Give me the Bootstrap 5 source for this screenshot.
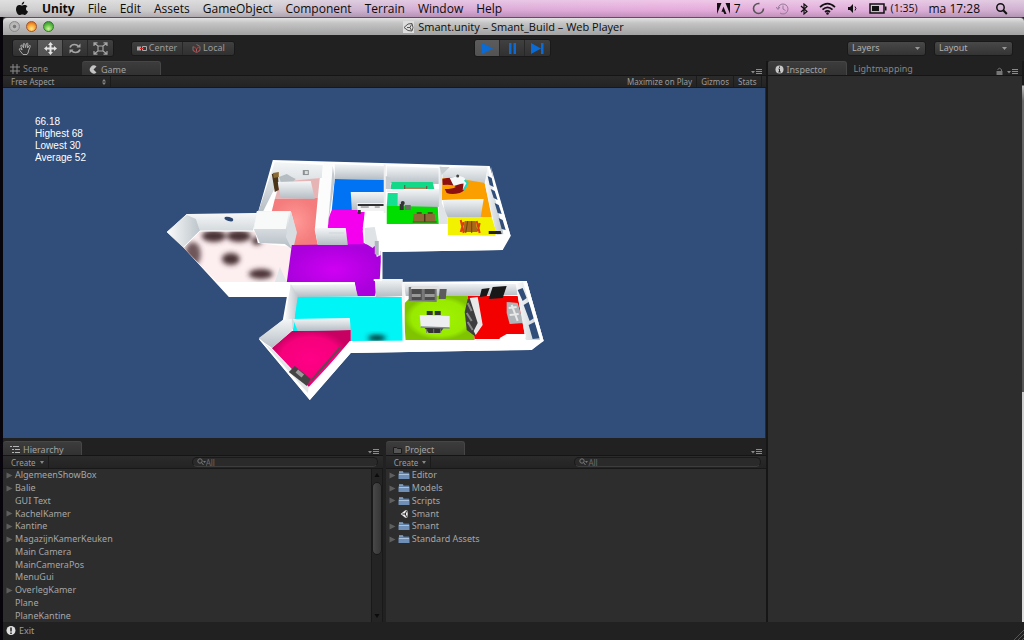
<!DOCTYPE html>
<html lang="en">
<head>
<meta charset="utf-8">
<meta name="viewport" content="width=device-width, initial-scale=1">
<title>Smant.unity – Smant_Build – Web Player</title>
<link href="https://cdn.jsdelivr.net/npm/bootstrap@5.3.0/dist/css/bootstrap.min.css" rel="stylesheet">
<style>
:root { --edge: #161616; --panel: #2d2d2d; --chrome: #212121; --ink: #9c9c9c; }
body { background: #07040c; color: var(--ink); font: 9px/12px "Noto Sans", sans-serif; overflow: hidden; }
svg { display: block; flex: none; }
a { color: inherit; text-decoration: none; }
button { font: inherit; color: inherit; }
.menubar { height: 17px; background: linear-gradient(rgba(255,255,255,.35), rgba(255,255,255,0) 60%, rgba(60,40,60,.2)), linear-gradient(90deg, #cfcfcf, #cbc9cb 25%, #cbb5cf 33%, #d9a9d6 45%, #e5aadb 65%, #e0aeda 85%, #cfb0d0); color: #0b0b0b; font: 12px/17px "Open Sans", sans-serif; padding: 0 16px 0 15px; }
.menus { gap: 13px; }
.extras { gap: 11px; }
.titlebar { height: 18px; background: linear-gradient(#e2e2e2, #c4c4c4 30%, #a2a2a2); border-top: 1px solid #555; border-radius: 4px 4px 0 0; color: #0b0b0b; font: 11px/17px "Open Sans", sans-serif; padding: 0 6px; }
.lights { gap: 6px; }
.lamp { width: 11px; height: 11px; border-radius: 50%; border: 1px solid #777; padding: 0; }
.lamp-close { background: radial-gradient(#777 20%, #bbb 35%, #aaa); border-color: #8a8a8a; }
.lamp-min { background: radial-gradient(circle at 50% 75%, #ffe98a, #f9a332 50%, #c8531c); border-color: #a4552a; }
.lamp-max { background: radial-gradient(circle at 50% 75%, #cdf79b, #63c044 50%, #27822a); border-color: #2f7a2d; }
.thirds { display: grid; grid-template-columns: 1fr auto 1fr; align-items: center; }
.app { margin-left: 3px; background: var(--chrome); min-height: 0; }
.toolbar { height: 26px; padding: 0 11px 0 9px; }
.tool { border: 0; background: linear-gradient(#404040, #303030); width: 25px; height: 17px; padding: 0; display: flex; align-items: center; justify-content: center; gap: 2px; border-right: 1px solid #272727; }
.toolset { border-radius: 3px; overflow: hidden; border: 1px solid #191919; height: 18px; }
.tool.on { background: linear-gradient(#5c5c5c, #525252); }
.toolset-low { height: 15px; margin-left: 17px; }
.toolset-low .tool { width: 51px; height: 13px; }
.pick { appearance: none; width: 79px; height: 15px; padding: 0 4px; font: inherit; color: #b0b0b0; border: 1px solid #191919; border-radius: 3px; background: url("data:image/svg+xml,%3Csvg xmlns='http://www.w3.org/2000/svg' viewBox='0 0 5 3'%3E%3Cpath d='M0 0h5L2.500 3z' fill='%23999'/%3E%3C/svg%3E") right 5px center / 5px 3px no-repeat, linear-gradient(#484848, #343434); }
.left-side { flex: 764 1 0; min-width: 0; }
.right-side { flex: 255 1 0; min-width: 0; border-left: 2px solid var(--edge); }
.view-part { flex: 377 1 0; min-height: 0; }
.lists-part { flex: 181 1 0; min-height: 0; padding-top: 3px; gap: 3px; }
.tabs { height: 14px; padding-right: 3px; }
.tabx { border: 0; background: none; color: #858585; height: 14px; width: 79px; padding: 2px 0 0 7px; gap: 3px; text-align: left; display: flex; align-items: center; white-space: nowrap; line-height: 12px; }
.tabx.on { background: linear-gradient(#3c3c3c, #323232); color: #a2a2a2; border: 1px solid #464646; border-width: 1px 1px 0 0; border-radius: 3px 3px 0 0; }
.subbar { height: 13px; background: linear-gradient(#2b2b2b, #232323); border-top: 1px solid #151515; border-bottom: 1px solid #181818; font-size: 8px; line-height: 11px; }
.subbar button { border: 0; border-right: 1px solid #1b1b1b; background: none; padding: 0 4px; height: 100%; line-height: 11px; }
.subbar .aspectbox { width: 108px; }
.view { background: #314d79; min-height: 0; border-right: 1px solid #1c2a44; }
.readout { position: absolute; left: 32px; top: 28px; color: #fff; font: 10px/12px "Liberation Sans", sans-serif; }
.panelx { background: var(--chrome); min-width: 0; flex: 1 1 0; }
.lists-part .subbar { height: 14px; line-height: 12px; }
.seek { width: 49%; margin-right: 5px; height: 10px; border-radius: 5px; border: 1px solid #1a1a1a; background: #2a2a2a; padding: 0 4px; color: #606060; border-bottom-color: #3d3d3d; }
.seek input { appearance: none; border: 0; background: none; padding: 0; font: 8px/8px "Noto Sans", sans-serif; height: 8px; color: inherit; min-width: 0; outline: 0; }
.seek input::placeholder { color: #6a6a6a; opacity: 1; }
.rows { display: grid; grid-template-rows: repeat(12, 1fr); background: var(--panel); min-height: 0; min-width: 0; flex: 1 1 0; margin: 0; padding: 0 0 0 3px; list-style: none; color: #a6a6a6; }
.rows li { display: flex; align-items: center; gap: 2px; min-height: 0; }
.twist { width: 7px; }
.scroller { width: 12px; background: #242424; border: 1px solid #191919; border-width: 0 1px; }
.thumb { flex: 72 1 0; border-radius: 5px; background: linear-gradient(90deg, #484848, #363636); border: 1px solid #1a1a1a; }
.thumb-rest { flex: 54 1 0; }
.inspect { background: var(--panel); border-top: 1px solid #151515; }
.statusbar { height: 18px; padding-left: 3px; gap: 3px; }
.gutter { width: 2px; background: linear-gradient(#181818 24px, #bbb 25px, #666 40px, #555 59%, #ccc 59%, #ddd); }
</style>
</head>
<body class="vh-100 d-flex flex-column">
<svg width="0" height="0" class="position-absolute" aria-hidden="true">
  <symbol id="tri" viewBox="0 0 7 7"><path d="M.5.5v6L6.500 3.500z" fill="#5e5e5e"/></symbol>
  <symbol id="burger" viewBox="0 0 12 6"><path d="M0 2h4L2 4.500z" fill="#8a8a8a"/><path d="M5 .5h6M5 2.500h6M5 4.500h6" stroke="#8a8a8a"/></symbol>
  <symbol id="folder" viewBox="0 0 12 10"><path d="M1 1.500h4l1 1h5v6H1z" fill="#52729a"/><path d="M.5 3.500h11v5.500H.5z" fill="#6f8fb6"/><path d="M1 4.500h10M1 2h4" stroke="#a8c0dc"/></symbol>
  <symbol id="cube" viewBox="0 0 12 12"><path d="M2 6 7.500 1.500l2.500.3.500 4.200-.5 4.200-2.500.3z" fill="currentColor"/><path d="M4 6h3.500M7.500 6l1.500-3.500M7.500 6 9 9.500" stroke="#222" stroke-width="1.200"/></symbol>
  <symbol id="lens" viewBox="0 0 9 8"><circle cx="3" cy="3" r="2.200" fill="none" stroke="#777"/><path d="m4.500 4.500 2 2.500" stroke="#777"/><path d="M6 3h3L7.500 5z" fill="#777"/></symbol>
</svg>

<nav class="menubar d-flex align-items-center justify-content-between" aria-label="Menu bar">
  <div class="menus d-flex align-items-center">
    <a href="#" aria-label="Apple"><svg width="14" height="15" viewBox="0 0 14 15"><path d="M9.200.5C9.400 2 8.200 3.700 6.700 3.700 6.500 2.200 7.800.8 9.200.5zM6.900 4.600C7.700 4.600 8.500 3.900 9.800 3.900c1.100 0 2.100.6 2.700 1.400-2.200 1.300-1.900 4.400.5 5.300C12.400 12.300 11.200 14 10 14c-1 0-1.400-.6-2.700-.6-1.200 0-1.700.6-2.700.6C2.800 14 1 10.900 1 8.200 1 5.600 2.600 4 4.300 4c1.200 0 1.900.6 2.600.6z" fill="#111"/></svg></a>
    <a href="#"><b>Unity</b></a><a href="#">File</a><a href="#">Edit</a><a href="#">Assets</a><a href="#">GameObject</a><a href="#">Component</a><a href="#">Terrain</a><a href="#">Window</a><a href="#">Help</a>
  </div>
  <div class="extras d-flex align-items-center">
    <span class="d-flex align-items-center gap-1"><svg width="13" height="11" viewBox="0 0 13 11"><path d="M0 0h4.500L0 11zM8.500 0H13v11zM6.500 3.800 9.500 11H7.300l-1-2.200H4.400z" fill="#111"/></svg>7</span>
    <svg width="13" height="13" viewBox="0 0 13 13"><circle cx="6.500" cy="6.500" r="5" fill="none" stroke="#555" stroke-width="1.600" stroke-dasharray="24 7.400"/></svg>
    <svg width="13" height="13" viewBox="0 0 13 13" fill="none" stroke="#97799a"><path d="M2 7a5 5 0 1 1 2 4M0 5l2 2.500L4 5M7 3.500V7l2.500 1.500"/></svg>
    <svg width="8" height="12" viewBox="0 0 8 12"><path d="m1 3 6 5.500L4 11V1l3 2.500L1 9" fill="none" stroke="#111" stroke-width="1.200"/></svg>
    <svg width="17" height="13" viewBox="0 0 17 13"><g fill="none" stroke="#111" stroke-width="1.700"><path d="M1 5.200q7.500-7 15 0M3.500 7.700q5-4.600 10 0M6 10q2.500-2.200 5 0"/></g><circle cx="8.500" cy="11.500" r="1.300" fill="#111"/></svg>
    <svg width="11" height="11" viewBox="0 0 11 11"><path d="M1 4h2l3-3v9L3 7H1z" fill="#111"/><path d="M8 3.500q1.800 2 0 4" stroke="#111" fill="none"/></svg>
    <span class="d-flex align-items-center gap-1"><svg width="18" height="11" viewBox="0 0 18 11"><rect x="1" y="1" width="14" height="9" fill="none" stroke="#111" stroke-width="1.500"/><path d="M3 3h7v5H3zM16 3.500h1.500v4H16z" fill="#111"/></svg><small>(1:35)</small></span>
    <span>ma 17:28</span>
    <svg class="ms-1" width="13" height="13" viewBox="0 0 13 13"><circle cx="5.500" cy="5.500" r="3.700" fill="none" stroke="#111" stroke-width="1.500"/><path d="m8.300 8.300 3.500 3.700" stroke="#111" stroke-width="2"/></svg>
  </div>
</nav>

<div class="app flex-grow-1 d-flex flex-column">
  <header class="titlebar thirds">
    <div class="lights d-flex"><button class="lamp lamp-close" aria-label="Close"></button><button class="lamp lamp-min" aria-label="Minimise"></button><button class="lamp lamp-max" aria-label="Zoom"></button></div>
    <div class="d-flex align-items-center gap-1"><svg width="11" height="12" viewBox="0 0 11 12"><path d="M0 0h11v12H0z" fill="#ddd"/><path d="M1 6.500 5 3l4-.5 1 4-1 3.500-4-.5zM4 6.500h3M7 6.500l1.500-3M7 6.500l1.500 3" stroke="#555" fill="none"/></svg><span>Smant.unity – Smant_Build – Web Player</span></div>
    <span></span>
  </header>

  <div class="toolbar thirds">
    <div class="d-flex align-items-center">
      <div class="toolset d-flex">
        <button class="tool" aria-label="Hand"><svg width="15" height="14" viewBox="0 0 15 14"><path d="M5 12.500 1.800 8.500q-1.500-2 .3-2l2 1.500L2.800 4q0-1.500 1.300-.7L5.700 6 5.200 2q.8-1.500 1.600 0l.8 3.500.9-4q1.200-1 1.400.4L9.500 6l1.800-2.500q1.400-.2 1 1L10.800 8 10 11l-1 1.500z" fill="none" stroke="#aaa"/></svg></button>
        <button class="tool on" aria-label="Move"><svg width="13" height="13" viewBox="0 0 13 13"><path d="M6.500 0 9 3H7.500v2.500H10V4l3 2.500L10 9V7.500H7.500V10H9l-2.500 3L4 10h1.500V7.500H3V9L0 6.500 3 4v1.500h2.500V3H4z" fill="#e3e3e3"/></svg></button>
        <button class="tool" aria-label="Rotate"><svg width="14" height="13" viewBox="0 0 14 13"><path d="M2 5.500q1-3 4.500-3 2.500 0 4 2M12 7.500q-1 3-4.500 3-2.500 0-4-2" fill="none" stroke="#a5a5a5" stroke-width="1.700"/><path d="M12.500 1.500v4h-4zM1.500 11.500v-4h4z" fill="#a5a5a5"/></svg></button>
        <button class="tool border-0" aria-label="Scale"><svg width="15" height="13" viewBox="0 0 15 13"><path d="M5 4h5v5H5zM1 4V.8h3.500M10.500.8H14V4M14 9v3.200h-3.500M4.500 12.200H1V9M1 1l4 3M14 1l-4 3M1 12l4-3M14 12l-4-3" fill="none" stroke="#a5a5a5" stroke-width="1.200"/></svg></button>
      </div>
      <div class="toolset toolset-low d-flex">
        <button class="tool"><svg width="10" height="7" viewBox="0 0 10 7"><path d="M0 1.500h4v4H0z" fill="#aaa"/><path d="M5.500 1.500h4v4h-4z" fill="none" stroke="#aaa"/><path d="M3 3h4v1H3z" fill="#d22"/></svg>Center</button>
        <button class="tool border-0"><svg width="9" height="9" viewBox="0 0 9 9"><path d="M4.500.5 8 2.500v4l-3.500 2-3.500-2v-4l3.500 2 3.500-2M4.500 4.500v4" fill="none" stroke="#777"/><path d="M1.500 2.500 4.500 4.500l3-2M2 6.500l2.500 1.500 2.500-1.500" stroke="#a22" fill="none"/></svg>Local</button>
      </div>
    </div>
    <div class="toolset d-flex">
      <button class="tool on" aria-label="Play"><svg width="13" height="11" viewBox="0 0 13 11"><path d="M1 0v11l11-5.500z" fill="#0a6ad6"/></svg></button>
      <button class="tool" aria-label="Pause"><svg width="9" height="11" viewBox="0 0 9 11"><path d="M1 0h2.500v11H1zM5.500 0H8v11H5.500z" fill="#0a6ad6"/></svg></button>
      <button class="tool border-0" aria-label="Step"><svg width="13" height="11" viewBox="0 0 13 11"><path d="M0 0v11l10-5.500zM10 0h2.500v11H10z" fill="#0a6ad6"/></svg></button>
    </div>
    <div class="d-flex justify-content-end gap-2">
      <select class="pick" aria-label="Layers"><option>Layers</option></select>
      <select class="pick" aria-label="Layout"><option>Layout</option></select>
    </div>
  </div>

  <main class="d-flex flex-grow-1 overflow-hidden">
    <div class="left-side d-flex flex-column">
      <section class="view-part d-flex flex-column">
        <div class="tabs d-flex align-items-end">
          <button class="tabx"><svg width="10" height="10" viewBox="0 0 10 10"><path d="M3 0v10M7 0v10M0 3h10M0 7h10" stroke="#8a8a8a"/></svg>Scene</button>
          <button class="tabx on"><svg width="9" height="9" viewBox="0 0 9 9"><path d="M7.500 1.500A4 4 0 1 0 7.500 7.500L4.500 4.500z" fill="#c4c4c4"/></svg>Game</button>
          <svg class="ms-auto" width="12" height="6"><use href="#burger"/></svg>
        </div>
        <div class="subbar d-flex pe-1">
          <button class="d-flex align-items-center justify-content-between ps-2 aspectbox">Free Aspect<svg width="4" height="6" viewBox="0 0 4 6"><path d="M0 2.500 2 0l2 2.500zM0 3.500 2 6l2-2.500z" fill="#888"/></svg></button>
          <button class="ms-auto">Maximize on Play</button><button>Gizmos</button><button>Stats</button>
        </div>
        <div class="view position-relative flex-grow-1">
          <svg width="100%" height="100%" viewBox="3 88 762 350" role="img" aria-label="Floor plan">
            <defs>
              <linearGradient id="wall" x2="0" y2="1"><stop stop-color="#f4f6f7"/><stop offset="1" stop-color="#b4bdc4"/></linearGradient>
              <linearGradient id="wallside"><stop stop-color="#fbfbfb"/><stop offset="1" stop-color="#bcc5cb"/></linearGradient>
              <radialGradient id="purple"><stop stop-color="#d000f4"/><stop offset="1" stop-color="#aa00dc"/></radialGradient>
              <radialGradient id="rose"><stop stop-color="#ff0086"/><stop offset=".75" stop-color="#f6007c"/><stop offset="1" stop-color="#c80062"/></radialGradient>
              <radialGradient id="lime"><stop stop-color="#a0f400"/><stop offset=".8" stop-color="#98ea00"/><stop offset="1" stop-color="#80c400"/></radialGradient>
              <radialGradient id="salmon"><stop stop-color="#ff9a98"/><stop offset="1" stop-color="#f47c7c"/></radialGradient>
              <filter id="soft" x="-40%" y="-60%" width="180%" height="220%"><feGaussianBlur stdDeviation="2.500"/></filter>
              <clipPath id="pale"><path d="M183 247l17-16h55l3 12 34 4-5 35h-70z"/></clipPath>
            </defs>
            <path d="M273 160l217 6 21 70-8 14-121 2v30l145-1 17 60-12 9-181 3-41 47-51-61 24-19 4-23h-58l-45-49-17-16 20-18 71-1z" fill="#fff"/>
            <!-- meeting room with stained floor -->
            <path d="M167 232l20-18h70l-4 17h-53l-17 16z" fill="url(#wall)"/>
            <path d="M167 232l20-17 9 4 4 12-17 16z" fill="url(#wallside)"/>
            <g clip-path="url(#pale)"><path d="M180 228h115v56H180z" fill="#fdeef0"/><g fill="#4a3034" filter="url(#soft)"><ellipse cx="214" cy="236" rx="12" ry="6"/><ellipse cx="239" cy="236" rx="12" ry="6"/><ellipse cx="193" cy="254" rx="8" ry="12" opacity=".8"/><ellipse cx="231" cy="259" rx="9" ry="6"/><ellipse cx="261" cy="274" rx="12" ry="5"/><ellipse cx="257" cy="241" rx="5" ry="4"/></g></g>
            <path d="M184 247l16-16h55" fill="none" stroke="#fff"/>
            <ellipse cx="229" cy="219" rx="4.500" ry="2" transform="rotate(15 229 219)" fill="#2c4672"/>
            <!-- upper-left rooms -->
            <path d="M275 162l48 3-1 13-45 6-14 28-5 1z" fill="url(#wall)"/>
            <path d="M280 182l40-4-2 20-43 1z" fill="#e7b4b6"/>
            <path d="M275 199l43-1-3 32 3 15h-26l-2-34h-18z" fill="url(#salmon)"/>
            <path d="M272 174l6-1 1 17-4 2z" fill="#4a3418"/><path d="M273 173l6-1v5l-5 1z" fill="#8a6a34"/>
            <path d="M279 177l8-3 5 3 4 2-3 3h-12z" fill="#b5bdc3"/><path d="M303 170h6v5h-6z" fill="#8a8f92"/><path d="M305 171h3v3h-3z" fill="#ddd"/>
            <path d="M278 182l33-1 4 18-34-1z" fill="url(#wall)"/>
            <path d="M257 211h34l6 21-5 17-7-5-25-1-6-14z" fill="url(#wall)"/><path d="M257 212h32l-3 17h-32z" fill="#f8f9f9"/><path d="M291 211l6 22-4 18-7-14z" fill="#d7dde0"/>
            <path d="M280 267l7 15h-12z" fill="#e3e6e8"/>
            <path d="M335 164l50 2v14l-50-1z" fill="url(#wall)"/>
            <path d="M387 166l52 2v16l-52-1z" fill="url(#wall)"/>
            <path d="M335 179l50 1v30h-53z" fill="#0072f4"/>
            <path d="M332 210h34l-3 18 3 17h-48z" fill="#f400ee"/>
            <path d="M292 245l89-1v34l-6 18h-18l-2-14h-68z" fill="url(#purple)"/>
            <path d="M324 163l9 1-5 64-12 3z" fill="#fcfcfc"/><path d="M333 166l2 13-7 48z" fill="#c4cbd0"/>
            <path d="M315 228h31l2 17h-30z" fill="url(#wall)"/><path d="M329 233h15M329 238h14" stroke="#cfd5d9"/>
            <path d="M351 192h34v18h-33z" fill="url(#wall)"/>
            <path d="M357 203h28v9h-27z" fill="#f2f2f2"/><path d="M358 204h26v2h-26zM358 210h3v4h-3z" fill="#333"/><path d="M361 207h8M375 207h5" stroke="#777"/>
            <path d="M365 211h22v15h40v25h-46v4l-4 2-2-11-11-3-1-12z" fill="#fff"/><path d="M365 228l10-1 3 15-5 6-8-5z" fill="#dfe3e6"/><path d="M375 241h4v15l-4-2z" fill="#aeb6bb"/>
            <path d="M392 182h41l2 9h-45z" fill="#13d887"/><path d="M405 187h22v2h-22z" fill="#a88759"/><path d="M405 185v4M427 186v4" stroke="#743"/>
            <path d="M387 206h51l1 18h-52z" fill="#00de00"/>
            <path d="M387 189h53v18l-42-1v-14h-11z" fill="url(#wall)"/><path d="M388 193h10v13h-11z" fill="#15df90"/>
            <path d="M384 164l2 1v48h-2z" fill="#eee"/><path d="M386 176l5 2v11h-5z" fill="#c5ccd0"/>
            <circle cx="403" cy="203" r="2" fill="#333"/><path d="M400 204h4v6h-4z" fill="#333"/><rect x="405" y="205" width="6" height="5" fill="#6a6f66"/>
            <path d="M414 214h21l1 8h-23z" fill="#8b6a38"/><path d="M425 214v8M417 213h5M428 213h5" stroke="#4d3519" stroke-width="1.500"/><path d="M413 222h24" stroke="#5b4522"/>
            <path d="M443 168l45-2-2 17-43 4z" fill="url(#wall)"/>
            <path d="M442 178l20 1 23 4 7 34h-12l3-18-41 1z" fill="#fb9f00"/>
            <path d="M442 179q8-2 15-1l2 5q5 1 7 2 0 6-6 8-8 2-13 0l-2-4q8 0 11-2-3-3-13-2z" fill="#8d1010"/><path d="M450 178l10-2q9 2 7 10l-4 4 1-7-10 3z" fill="#f5f8f8"/><path d="M465 180l3 3-4 7" stroke="#20d8c8" stroke-width="2" fill="none"/><circle cx="458" cy="176" r="1.500" fill="#444"/>
            <path d="M448 217h44l5 16-2 3h-47z" fill="#f2f200"/>
            <path d="M443 200l41-1-3 18h-35z" fill="url(#wall)"/>
            <path d="M440 166l3 1-1 36 6 14v7l-8 1-1-18z" fill="#e0e4e6"/><path d="M440 167h10l-8 8z" fill="#c8cfd3"/>
            <path d="M465 221h11l2 11h-15z" fill="#a86a16"/><path d="M461 220l3 13M464 222l-3 10M477 221l3 12M480 223l-2 8" stroke="#e03a10" stroke-width="2"/><path d="M468 221l-2 12M472 221v12" stroke="#704010"/>
            <path d="M488 168l16 66-7 1-12-52z" fill="url(#wallside)"/><path d="M491 166l20 70-7-1z" fill="#fff"/>
            <path d="M488 176l4 2 2 9-4-2zM491 189l4 2 3 9-4-2zM495 203l4 2 3 9-4-1zM499 218l4 2 3 10-4-1z" fill="#314d79"/>
            <path d="M489 231h12l1 3h-13z" fill="#222"/>
            <path d="M380 224h68v11l58 1-3 14-121 2z" fill="#fff"/><path d="M382 252v28" stroke="#fff" stroke-width="1.500"/>
            <!-- lower wing -->
            <path d="M297 296l105 1 1 44h-52v-11l-58 1z" fill="#00f5f6"/>
            <path d="M292 331l59-1v12l-43 46-37-39z" fill="url(#rose)"/>
            <path d="M290 285l65-1 3 12-61 1z" fill="url(#wall)"/><path d="M291 284l7 12-5 34-8-11z" fill="url(#wallside)"/>
            <path d="M259 338l24-18 9-1v12l-21 18z" fill="url(#wall)"/>
            <path d="M293 319l57-1 1 12-53 1z" fill="url(#wall)"/>
            <path d="M375 279h28v17l-27 1z" fill="url(#wall)"/><path d="M382 252v29h-8v-2h6z" fill="#fff"/>
            <ellipse cx="377" cy="338" rx="9" ry="3" fill="#062a2a" filter="url(#soft)"/>
            <path d="M405 303l7-7h56l7 44h-70z" fill="url(#lime)"/><path d="M468 296h50l8 43h-51z" fill="#f30000"/>
            <path d="M404 283l114 1v11l-50 1h-62z" fill="url(#wall)"/>
            <path d="M402 283l3-1v20l-2 10zM404 317l2 24h-3z" fill="#f5f5f5"/>
            <path d="M409 287l28-1v16l-28-1z" fill="#777"/><path d="M412 288h10v12h-10zM425 288h10v12h-10z" fill="#4c4c4c"/><path d="M412 286h27v3h-28z" fill="#ddd"/><path d="M412 294h9v3h-9zM425 294h10v3h-10z" fill="#999"/><path d="M440 289h7l-1 10h-7z" fill="#5c5c5c"/>
            <path d="M427 311h6v4h-6zM435 311h6v4h-6zM425 328h19l-4 5h-11z" fill="#333"/><path d="M420 315l30 1v12l-29-1z" fill="#eceef0"/><path d="M421 327l29 1" stroke="#818a90" stroke-width="1.500"/><path d="M427 329v4M434 329v4M441 329v4" stroke="#777"/>
            <path d="M468 299l8-1 5 26-6 12-8-6-2-18z" fill="#3e3e3e"/><path d="M470 298l8-1 5 28-7 10-2-4 4-8z" fill="#e8e8e8"/><path d="M468 303l4 8M467 313l5 8M468 322l5 8" stroke="#888" stroke-width="2"/>
            <path d="M482 289l8-1-3 8-7 1zM493 287l14-1-4 12-14 1z" fill="#181818"/>
            <path d="M507 302l11 1 6 20-14 1-3-11z" fill="#aeb4b8"/><path d="M512 305l6 16M509 308l8-1M510 315l9-1" stroke="#e8e8e8" stroke-width="2"/>
            <path d="M516 284l11-3 17 60-18-1z" fill="url(#wallside)"/>
            <path d="M518 290l5-2 4 10-4 3zM524 305l5-3 7 15-6 4zM529 325l6-3 7 16-9 1z" fill="#314d79"/>
            <path d="M523 281h4l17 60-3 1z" fill="#fff"/><path d="M500 338l7-4h19v8h-26z" fill="#fff"/>
            <path d="M350 341l193-1-11 10-181 3-41 47-51-61 12 8 39 41z" fill="#fff"/>
            <path d="M264 343l8 6 37 38-1 6z" fill="#e2e5e7"/>
            <path d="M295 366l16 13-4 7-18-14z" fill="#444"/><path d="M297 371l6 5" stroke="#999" stroke-width="4"/><path d="M341 347l-30 34" stroke="#5a4c50" stroke-width="2"/>
          </svg>
          <div class="readout">66.18<br>Highest 68<br>Lowest 30<br>Average 52</div>
        </div>
      </section>

      <div class="lists-part d-flex">
        <section class="panelx d-flex flex-column">
          <div class="tabs d-flex align-items-end">
            <button class="tabx on"><svg width="10" height="9" viewBox="0 0 10 9"><path d="M0 1.500h2M3 1.500h6M2 4.500h2M5 4.500h5M2 7.500h2M5 7.500h5" stroke="#b5b5b5"/></svg>Hierarchy</button>
            <svg class="ms-auto" width="12" height="6"><use href="#burger"/></svg>
          </div>
          <div class="subbar d-flex align-items-center justify-content-between">
            <button class="d-flex align-items-center gap-1 ps-2">Create<svg width="4" height="3" viewBox="0 0 4 3"><path d="M0 0h4L2 3z" fill="#888"/></svg></button>
            <label class="seek d-flex align-items-center"><svg width="9" height="8"><use href="#lens"/></svg><input type="text" placeholder="All" aria-label="Search hierarchy"></label>
          </div>
          <div class="d-flex flex-grow-1 overflow-hidden">
            <ul class="rows" id="hierarchy"></ul>
            <div class="scroller d-flex flex-column align-items-stretch">
              <svg class="mx-auto" width="6" height="13" viewBox="0 0 6 13"><path d="M.5 8 3 4l2.500 4z" fill="#0c0c0c"/></svg>
              <div class="thumb"></div><div class="thumb-rest"></div>
              <svg class="mx-auto" width="6" height="13" viewBox="0 0 6 13"><path d="M.5 5 3 9l2.500-4z" fill="#0c0c0c"/></svg>
            </div>
          </div>
        </section>
        <section class="panelx d-flex flex-column">
          <div class="tabs d-flex align-items-end">
            <button class="tabx on"><svg width="9" height="8" viewBox="0 0 9 8"><path d="M.5 1.500h3l1 1h4v5h-8z" fill="#555" stroke="#1c1c1c"/></svg>Project</button>
            <svg class="ms-auto" width="12" height="6"><use href="#burger"/></svg>
          </div>
          <div class="subbar d-flex align-items-center justify-content-between">
            <button class="d-flex align-items-center gap-1 ps-2">Create<svg width="4" height="3" viewBox="0 0 4 3"><path d="M0 0h4L2 3z" fill="#888"/></svg></button>
            <label class="seek d-flex align-items-center"><svg width="9" height="8"><use href="#lens"/></svg><input type="text" placeholder="All" aria-label="Search project"></label>
          </div>
          <ul class="rows" id="project"></ul>
        </section>
      </div>
    </div>

    <aside class="right-side d-flex flex-column">
      <div class="tabs d-flex align-items-end">
        <button class="tabx on"><svg width="9" height="9" viewBox="0 0 9 9"><circle cx="4.500" cy="4.500" r="4" fill="#c8c8c8"/><path d="M4.500 1.500v1.300M3.500 4h1v3M3.300 7h2.500" stroke="#222" fill="none"/></svg>Inspector</button>
        <button class="tabx">Lightmapping</button>
        <span class="ms-auto d-flex align-items-end gap-1"><svg width="7" height="8" viewBox="0 0 7 8"><path d="M.5 4h6v4h-6z" fill="#777"/><path d="M1.500 2.500q2-2.500 4 0V4" fill="none" stroke="#777"/></svg><svg width="12" height="6"><use href="#burger"/></svg></span>
      </div>
      <div class="inspect flex-grow-1"></div>
    </aside>
    <div class="gutter"></div>
  </main>

  <footer class="statusbar d-flex align-items-center"><svg width="10" height="10" viewBox="0 0 10 10"><circle cx="5" cy="4.500" r="4.500" fill="#e0e0e0"/><path d="M5 1.500v4M5 6.500V8" stroke="#222" stroke-width="1.500"/></svg>Exit<svg class="ms-auto align-self-end" width="10" height="10" viewBox="0 0 10 10"><path d="M0 10 10 0M4 10l6-6M8 10l2-2" stroke="#555"/></svg></footer>
</div>

<script src="https://cdn.jsdelivr.net/npm/bootstrap@5.3.0/dist/js/bootstrap.bundle.min.js"></script>
<script>
const twist = open => `<svg class="twist" width="7" height="7">${open ? '<use href="#tri"/>' : ''}</svg>`;
const parents = ['AlgemeenShowBox', 'Balie', 'KachelKamer', 'Kantine', 'MagazijnKamerKeuken', 'OverlegKamer'];
const objects = ['AlgemeenShowBox', 'Balie', 'GUI Text', 'KachelKamer', 'Kantine', 'MagazijnKamerKeuken', 'Main Camera', 'MainCameraPos', 'MenuGui', 'OverlegKamer', 'Plane', 'PlaneKantine'];
document.getElementById('hierarchy').innerHTML = objects.map(n => `<li>${twist(parents.includes(n))}${n}</li>`).join('');
const assets = [['Editor', 1], ['Models', 1], ['Scripts', 1], ['Smant', 0], ['Smant', 1], ['Standard Assets', 1]];
document.getElementById('project').innerHTML = assets.map(([n, dir]) => `<li>${twist(dir)}<svg width="12" height="10" color="#eee"><use href="#${dir ? 'folder' : 'cube'}"/></svg>${n}</li>`).join('');
</script>
</body>
</html>
